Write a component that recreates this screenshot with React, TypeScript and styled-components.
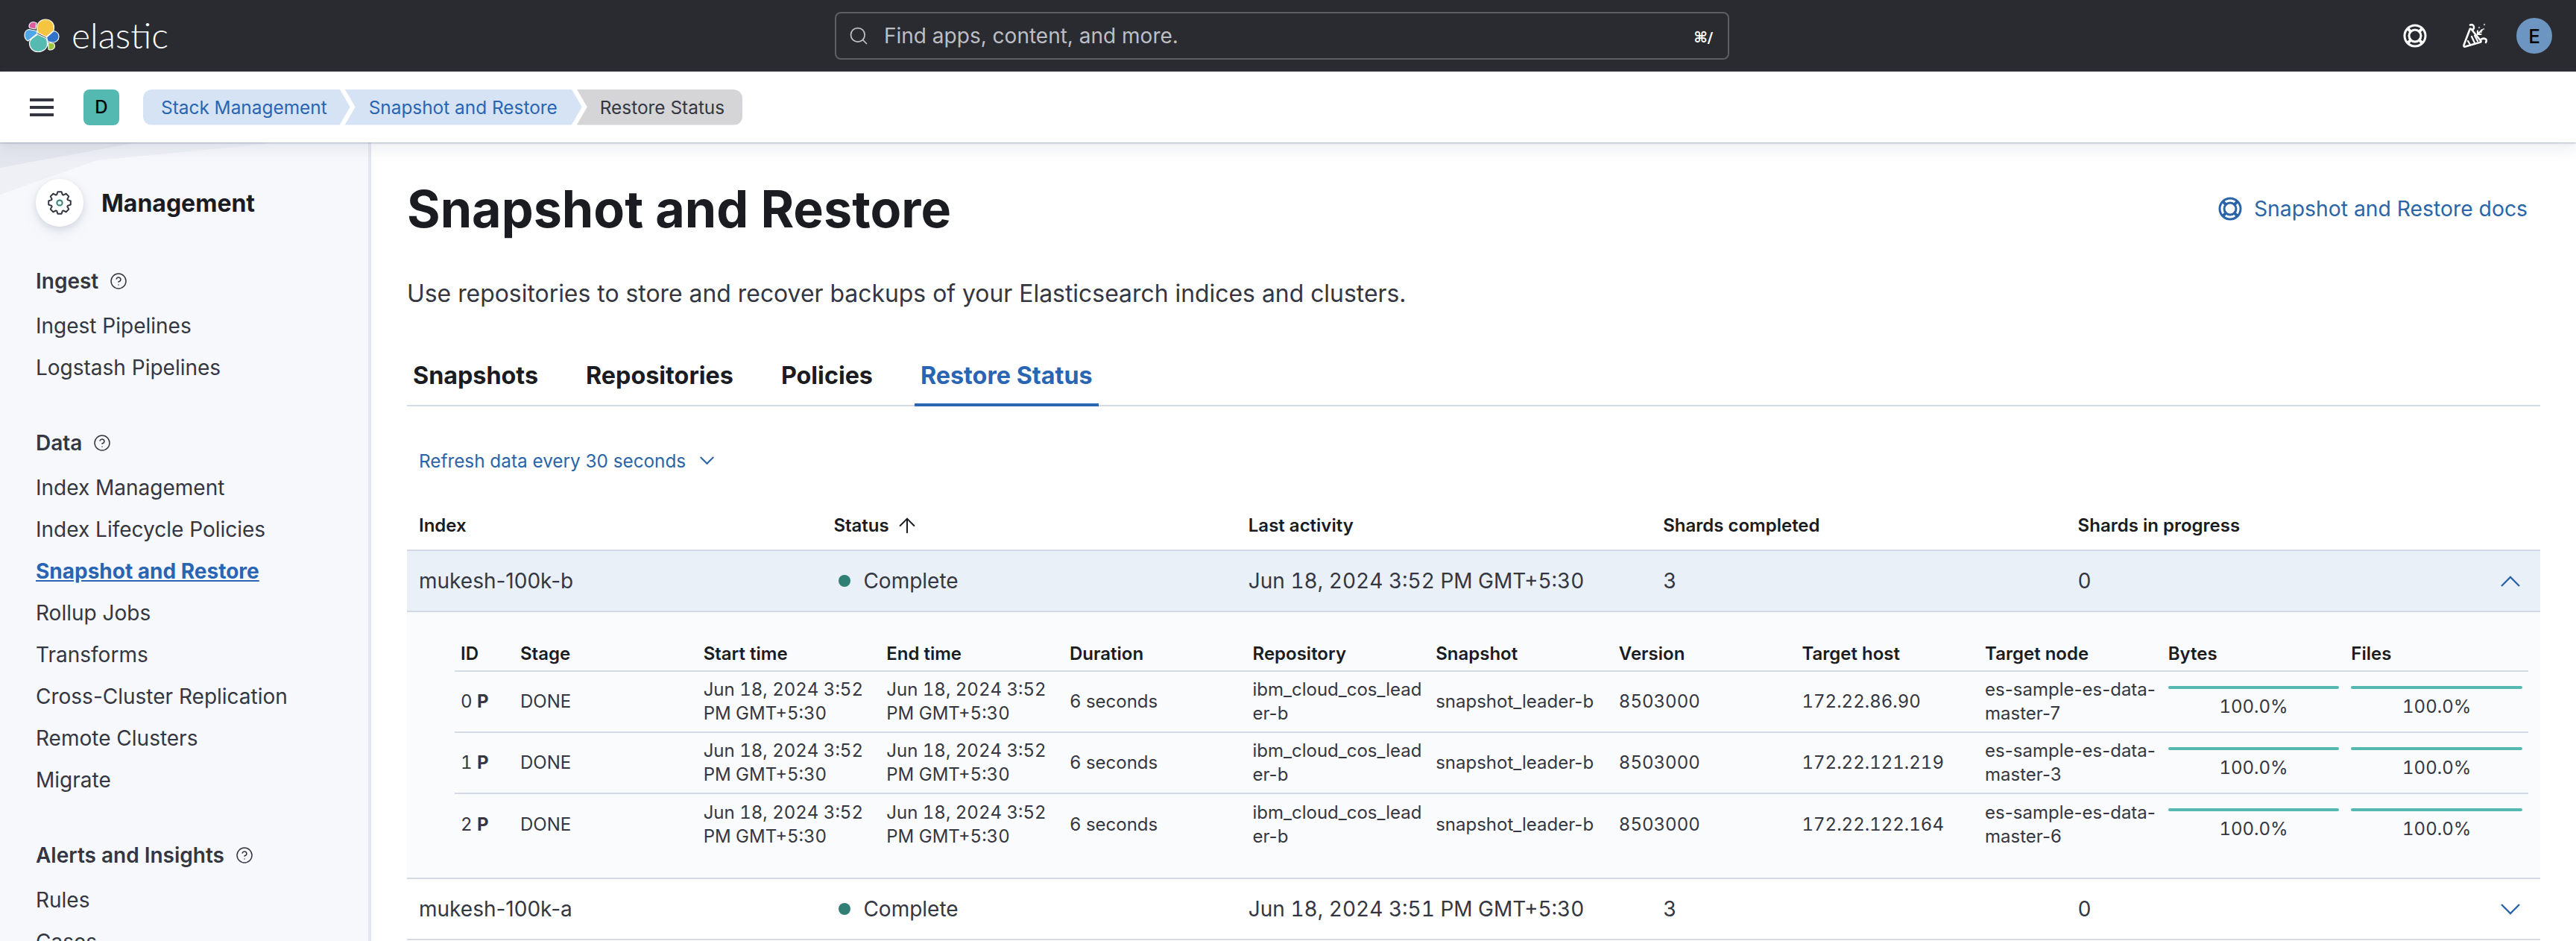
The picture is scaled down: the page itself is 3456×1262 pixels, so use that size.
import * as React from 'react';
import styled, { createGlobalStyle } from 'styled-components';
import { ArrowUp, CircleHelp, Search } from 'lucide-react';

const GlobalStyle = createGlobalStyle`
  html, body {
    margin: 0;
    padding: 0;
    height: 100%;
    overflow: hidden;
    background: #fff;
    font-family: Inter, "Liberation Sans", sans-serif;
    color: #343741;
  }
  * {
    box-sizing: border-box;
  }
`;

const Page = styled.div`
  display: flex;
  flex-direction: column;
  height: 1262px;
  overflow: hidden;
`;

const TopBar = styled.header`
  display: flex;
  align-items: center;
  flex: none;
  height: 96px;
  padding: 0 32px;
  background: #292b31;
`;

const LogoGroup = styled.div`
  display: flex;
  align-items: center;
  flex: 0 0 1088px;
  gap: 8px;
`;

const Wordmark = styled.span`
  font-family: Lato, Inter, sans-serif;
  font-weight: 300;
  font-size: 48px;
  line-height: 1;
  color: #fff;
  margin-top: -2px;
`;

const SearchBox = styled.div`
  display: flex;
  align-items: center;
  flex: none;
  width: 1200px;
  height: 64px;
  padding: 0 16px;
  border: 2px solid #5c5e63;
  border-radius: 8px;
`;

const SearchText = styled.span`
  flex: 1;
  margin-left: 20px;
  font-size: 28px;
  color: #bcbec4;
`;

const ShortcutKey = styled.span`
  font-family: 'DejaVu Sans', sans-serif;
  font-size: 20px;
  font-weight: 700;
  color: #fff;
  margin-top: 4px;
  margin-right: 4px;
`;

const TopActions = styled.div`
  display: flex;
  align-items: center;
  justify-content: flex-end;
  flex: 1;
  gap: 40px;
`;

const Avatar = styled.div`
  display: flex;
  align-items: center;
  justify-content: center;
  width: 48px;
  height: 48px;
  border-radius: 50%;
  background: #6d95c1;
  color: #000;
  font-size: 26px;
  font-weight: 500;
`;

const NavBar = styled.nav`
  position: relative;
  z-index: 2;
  display: flex;
  align-items: center;
  flex: none;
  height: 95px;
  padding: 0 40px;
  background: #fff;
  box-shadow: 0 1px 2px rgba(120, 132, 160, 0.55), 0 8px 20px rgba(152, 162, 179, 0.2);
`;

const MenuButton = styled.div`
  display: flex;
  flex-direction: column;
  gap: 6px;
  width: 32px;
  margin-right: 40px;
`;

const MenuBar = styled.span`
  display: block;
  height: 4px;
  background: #343741;
`;

const SpaceBadge = styled.div`
  display: flex;
  align-items: center;
  justify-content: center;
  width: 48px;
  height: 48px;
  margin-right: 32px;
  border-radius: 8px;
  background: #54b9b0;
  color: #000;
  font-size: 24px;
  font-weight: 500;
`;

const Crumbs = styled.div`
  display: flex;
  align-items: center;
`;

const Crumb = styled.span<{ $pos: 'first' | 'middle' | 'last' }>`
  display: flex;
  align-items: center;
  height: 48px;
  font-size: 24.4px;
  white-space: nowrap;
  color: ${p => (p.$pos === 'last' ? '#343741' : '#2a65b3')};
  background: ${p => (p.$pos === 'last' ? '#d5d5d8' : '#d6e3f4')};
  margin-left: ${p => (p.$pos === 'first' ? '0' : '-7px')};
  padding: ${p =>
    p.$pos === 'first' ? '0 31px 0 24px' : p.$pos === 'middle' ? '0 33px 0 32px' : '0 24px 0 31px'};
  border-radius: ${p =>
    p.$pos === 'first' ? '12px 0 0 12px' : p.$pos === 'last' ? '0 12px 12px 0' : '0'};
  clip-path: ${p =>
    p.$pos === 'first'
      ? 'polygon(0 0, calc(100% - 14px) 0, 100% 50%, calc(100% - 14px) 100%, 0 100%)'
      : p.$pos === 'middle'
        ? 'polygon(0 0, calc(100% - 14px) 0, 100% 50%, calc(100% - 14px) 100%, 0 100%, 14px 50%)'
        : 'polygon(0 0, 100% 0, 100% 100%, 0 100%, 14px 50%)'};
`;

const Body = styled.div`
  display: flex;
  flex: 1;
  min-height: 0;
`;

const Sidebar = styled.aside`
  position: relative;
  flex: none;
  width: 498px;
  padding: 49px 48px 0;
  overflow: hidden;
  background: #f6f8fc;
  border-right: 4px solid #e4e7f0;
`;

const SidebarDecor = styled.svg`
  position: absolute;
  top: 0;
  left: 0;
`;

const SidebarHead = styled.div`
  position: relative;
  display: flex;
  align-items: center;
  gap: 24px;
  margin-bottom: 45px;
`;

const GearCircle = styled.div`
  display: flex;
  align-items: center;
  justify-content: center;
  width: 64px;
  height: 64px;
  border-radius: 50%;
  background: #fff;
  box-shadow: 0 3px 8px rgba(152, 162, 179, 0.3), 0 8px 18px rgba(152, 162, 179, 0.14);
`;

const SidebarTitle = styled.h2`
  margin: 0;
  font-size: 32px;
  font-weight: 700;
  color: #1a1c21;
`;

const NavSection = styled.section`
  margin-bottom: 45px;
`;

const SectionHead = styled.div`
  display: flex;
  align-items: center;
  gap: 15px;
  height: 56px;
  margin-bottom: 4px;
  font-size: 28px;
  font-weight: 600;
  color: #343741;
`;

const NavItem = styled.a<{ $active?: boolean }>`
  display: flex;
  align-items: center;
  height: 56px;
  font-size: 28px;
  font-weight: ${p => (p.$active ? 700 : 400)};
  color: ${p => (p.$active ? '#2a65b3' : '#343741')};
  text-decoration: ${p => (p.$active ? 'underline' : 'none')};
`;

const Main = styled.main`
  flex: 1;
  min-width: 0;
  padding: 0 48px;
  background: #fff;
`;

const PageHead = styled.div`
  display: flex;
  align-items: center;
  justify-content: space-between;
  margin-top: 49px;
`;

const PageTitle = styled.h1`
  margin: 0;
  font-size: 68.2px;
  line-height: 80px;
  font-weight: 700;
  color: #1a1c21;
`;

const DocsLink = styled.a`
  display: flex;
  align-items: center;
  gap: 16px;
  margin-right: 17px;
  font-size: 28.3px;
  color: #2a65a8;
`;

const Description = styled.p`
  margin: 50px 0 0;
  font-size: 31.9px;
  line-height: 48px;
  color: #343741;
`;

const Tabs = styled.div`
  display: flex;
  gap: 48px;
  height: 85px;
  margin-top: 42px;
  border-bottom: 2px solid #d3dae6;
`;

const Tab = styled.div<{ $active?: boolean }>`
  display: flex;
  align-items: center;
  height: 85px;
  padding: 5px 8px 0;
  font-size: 32.3px;
  font-weight: 700;
  color: ${p => (p.$active ? '#2a65b3' : '#1a1c21')};
  border-bottom: 4px solid ${p => (p.$active ? '#2a65b3' : 'transparent')};
`;

const RefreshLink = styled.div`
  display: flex;
  align-items: center;
  gap: 19px;
  height: 32px;
  margin-top: 57px;
  padding-left: 16px;
  font-size: 24.3px;
  color: #2a65a8;
`;

const TableGrid = styled.div`
  display: grid;
  grid-template-columns: repeat(5, 1fr) 80px;
  align-items: center;
`;

const HeadRow = styled(TableGrid)`
  height: 71px;
  margin-top: 34px;
  padding-top: 4px;
  border-bottom: 2px solid #d3dae6;
`;

const HeadCell = styled.div`
  display: flex;
  align-items: center;
  gap: 8px;
  padding-left: 16px;
  font-size: 24px;
  font-weight: 600;
  color: #1a1c21;
`;

const DataRow = styled(TableGrid)<{ $open?: boolean }>`
  height: 82px;
  border-bottom: 2px solid #d3dae6;
  background: ${p => (p.$open ? '#e9f0f8' : '#fff')};
`;

const DataCell = styled.div<{ $num?: boolean }>`
  padding-left: 16px;
  font-size: 28px;
  color: #343741;
  font-variant-numeric: ${p => (p.$num ? 'tabular-nums' : 'normal')};
`;

const StatusCell = styled(DataCell)`
  display: flex;
  align-items: center;
  gap: 17px;
  padding-left: 23px;
`;

const StatusDot = styled.span`
  width: 16px;
  height: 16px;
  border-radius: 50%;
  background: #2f7f75;
`;

const Expander = styled.div`
  display: flex;
  justify-content: center;
`;

const Expanded = styled.div`
  padding: 32px 16px 30px 64px;
  background: #fafbfd;
  border-bottom: 2px solid #d3dae6;
`;

const ShardGrid = styled.div`
  display: grid;
  grid-template-columns: 80px repeat(11, minmax(0, 1fr));
`;

const ShardHead = styled(ShardGrid)`
  align-items: center;
  height: 48px;
  border-bottom: 2px solid #d3dae6;
`;

const ShardHeadCell = styled.div`
  padding: 0 8px;
  font-size: 24px;
  font-weight: 600;
  color: #1a1c21;
`;

const ShardRow = styled(ShardGrid)`
  align-items: center;
  height: 82px;
  &:not(:last-child) {
    border-bottom: 2px solid #d3dae6;
  }
`;

const ShardCell = styled.div<{ $num?: boolean }>`
  padding: 0 8px;
  font-size: 24px;
  line-height: 32px;
  color: #343741;
  overflow-wrap: anywhere;
  font-variant-numeric: ${p => (p.$num ? 'tabular-nums' : 'normal')};
`;

const ProgressCell = styled.div`
  align-self: start;
  padding: 19px 8px 0;
  font-size: 24px;
  line-height: 32px;
  text-align: center;
  color: #343741;
  font-variant-numeric: tabular-nums;
`;

const ProgressTrack = styled.div`
  height: 4px;
  margin-bottom: 8px;
  border-radius: 2px;
  background: #54b9b0;
`;

const Logo: React.FC = () => (
  <svg width="64" height="64" viewBox="0 0 64 64" style={{ marginLeft: -8, flex: 'none' }}>
    <g stroke="#fff" strokeWidth="1.2" strokeLinejoin="round">
      <path fill="#de5ba0" d="M15 19C15 16 17.5 13.5 20.5 13.5C22 13.5 23.5 14 25 15L23.5 23L16 21.5C15.3 21 15 20 15 19Z" />
      <path fill="#f5c542" d="M25.5 21C26 14 31 10 37 10C44 10 48.5 15 48.5 21C48.5 23 48 25 47 26L38 33.5L27 28C26 26 25.5 23.5 25.5 21Z" />
      <path fill="#4fa7e8" d="M15 23.5L25 25.5L26 29L13.5 39C10.5 37.5 9 34.5 9 31C9 27 11.5 24 15 23.5Z" />
      <path fill="#3173c8" d="M48 25.5C52 26 55 29 55 33C55 38 51 41 46.5 41L40 39.5L38.5 34Z" />
      <path fill="#55bab0" d="M15.5 42C15.5 39 16.5 37.5 19 35.5L26.5 30L38 35.5C39.5 38 39.5 40 39.5 43C39.5 49 34 53.5 27 53.5C20 53.5 15.5 48 15.5 42Z" />
      <path fill="#98c83c" d="M40.5 41L48.5 42.5C49 43.5 49.5 44.5 49.5 45.5C49.5 48.5 47 51 44 51C43 51 42 50.8 41 50.2Z" />
    </g>
  </svg>
);

const LifeBuoy: React.FC<{ color: string }> = ({ color }) => (
  <svg width="32" height="32" viewBox="0 0 32 32" fill="none" stroke={color} strokeWidth="3">
    <circle cx="16" cy="16" r="14" />
    <circle cx="16" cy="16" r="8" />
    <path d="M6 6L10.3 10.3M26 6L21.7 10.3M6 26L10.3 21.7M26 26L21.7 21.7" strokeWidth="4" />
  </svg>
);

const Cheer: React.FC = () => (
  <svg width="48" height="48" viewBox="0 0 48 48" fill="none" stroke="#fff" strokeWidth="2.6" strokeLinecap="round" strokeLinejoin="round" style={{ margin: '0 -8px 0 0' }}>
    <path d="M17.5 15.5L9.5 36.5Q9 39 11.5 38.5L32 32.5Q33 31.5 32 30.5L19.5 15Q18 14 17.5 15.5Z" />
    <path d="M15 31L17.5 35M20 25L24 33.5M24 23.5L28 31" strokeWidth="2.2" />
    <path d="M18 9.5Q22 8 23 12Q23.5 14 22 15.5" />
    <path d="M28 17.5L28 22L32.5 22M28 22L34 16" strokeWidth="2.2" />
    <path d="M33 28.5Q37 26.5 39.5 29Q40.5 31 39 33" />
    <path d="M30 13h.1M37 9h.1M36 15h.1M33 19h.1" strokeWidth="2.4" opacity="0.6" />
  </svg>
);

const GearIcon: React.FC = () => {
  // eight toothed cog, points worked out once per render
  const points: string[] = [];
  for (let i = 0; i < 8; i++) {
    const a = (i * Math.PI) / 4 - Math.PI / 2;
    const spread = 0.2;
    [
      [11.5, a - spread - 0.14],
      [15, a - spread + 0.03],
      [15, a + spread - 0.03],
      [11.5, a + spread + 0.14],
    ].forEach(([r, t]) => {
      points.push(`${(16 + r * Math.cos(t)).toFixed(2)},${(16 + r * Math.sin(t)).toFixed(2)}`);
    });
  }
  return (
    <svg width="32" height="32" viewBox="0 0 32 32" fill="none">
      <polygon points={points.join(' ')} stroke="#343741" strokeWidth="2" strokeLinejoin="round" />
      <circle cx="16" cy="16" r="3.6" stroke="#2f7f75" strokeWidth="2" />
    </svg>
  );
};

const Chevron: React.FC<{ up?: boolean; width: number; stroke: number }> = ({ up, width, stroke }) => (
  <svg width={width} height={width / 2 + 2} viewBox="0 0 26 15" fill="none" stroke="#2a65a8" strokeWidth={(stroke * 26) / width}>
    <path d={up ? 'M1 14L13 2L25 14' : 'M1 1L13 13L25 1'} />
  </svg>
);

const HelpIcon = () => <CircleHelp size={24} strokeWidth={1.5} color="#343741" />;

const shards = [
  { id: 0, host: '172.22.86.90', node: 'es-sample-es-data-master-7' },
  { id: 1, host: '172.22.121.219', node: 'es-sample-es-data-master-3' },
  { id: 2, host: '172.22.122.164', node: 'es-sample-es-data-master-6' },
];

const shardColumns = [
  'ID',
  'Stage',
  'Start time',
  'End time',
  'Duration',
  'Repository',
  'Snapshot',
  'Version',
  'Target host',
  'Target node',
  'Bytes',
  'Files',
];

const navGroups = [
  { title: 'Ingest', items: ['Ingest Pipelines', 'Logstash Pipelines'] },
  {
    title: 'Data',
    items: [
      'Index Management',
      'Index Lifecycle Policies',
      'Snapshot and Restore',
      'Rollup Jobs',
      'Transforms',
      'Cross-Cluster Replication',
      'Remote Clusters',
      'Migrate',
    ],
  },
  { title: 'Alerts and Insights', items: ['Rules', 'Cases'] },
];

const tabs = ['Snapshots', 'Repositories', 'Policies', 'Restore Status'];

const stamp = 'Jun 18, 2024 3:52 PM GMT+5:30';

const App: React.FC = () => (
  <Page>
    <GlobalStyle />
    <TopBar>
      <LogoGroup>
        <Logo />
        <Wordmark>elastic</Wordmark>
      </LogoGroup>
      <SearchBox>
        <Search size={28} strokeWidth={1.5} color="#bcbec4" />
        <SearchText>Find apps, content, and more.</SearchText>
        <ShortcutKey>⌘/</ShortcutKey>
      </SearchBox>
      <TopActions>
        <LifeBuoy color="#fff" />
        <Cheer />
        <Avatar>E</Avatar>
      </TopActions>
    </TopBar>
    <NavBar>
      <MenuButton>
        <MenuBar />
        <MenuBar />
        <MenuBar />
      </MenuButton>
      <SpaceBadge>D</SpaceBadge>
      <Crumbs>
        <Crumb $pos="first">Stack Management</Crumb>
        <Crumb $pos="middle">Snapshot and Restore</Crumb>
        <Crumb $pos="last">Restore Status</Crumb>
      </Crumbs>
    </NavBar>
    <Body>
      <Sidebar>
        <SidebarDecor width="498" height="90" viewBox="0 0 498 90">
          <polygon points="0,70 130,24 358,2 358,0 0,0" fill="#eef0f6" />
          <polygon points="0,34 185,0 0,0" fill="#e4e6ee" />
        </SidebarDecor>
        <SidebarHead>
          <GearCircle>
            <GearIcon />
          </GearCircle>
          <SidebarTitle>Management</SidebarTitle>
        </SidebarHead>
        {navGroups.map(group => (
          <NavSection key={group.title}>
            <SectionHead>
              {group.title}
              <HelpIcon />
            </SectionHead>
            {group.items.map(item => (
              <NavItem key={item} $active={item === 'Snapshot and Restore'}>
                {item}
              </NavItem>
            ))}
          </NavSection>
        ))}
      </Sidebar>
      <Main>
        <PageHead>
          <PageTitle>Snapshot and Restore</PageTitle>
          <DocsLink>
            <LifeBuoy color="#2a65a8" />
            Snapshot and Restore docs
          </DocsLink>
        </PageHead>
        <Description>
          Use repositories to store and recover backups of your Elasticsearch indices and clusters.
        </Description>
        <Tabs>
          {tabs.map(tab => (
            <Tab key={tab} $active={tab === 'Restore Status'}>
              {tab}
            </Tab>
          ))}
        </Tabs>
        <RefreshLink>
          Refresh data every 30 seconds
          <Chevron width={19} stroke={2} />
        </RefreshLink>
        <HeadRow>
          <HeadCell>Index</HeadCell>
          <HeadCell>
            Status <ArrowUp size={32} strokeWidth={1.5} color="#1a1c21" />
          </HeadCell>
          <HeadCell>Last activity</HeadCell>
          <HeadCell>Shards completed</HeadCell>
          <HeadCell>Shards in progress</HeadCell>
          <div />
        </HeadRow>
        <DataRow $open>
          <DataCell>mukesh-100k-b</DataCell>
          <StatusCell>
            <StatusDot />
            Complete
          </StatusCell>
          <DataCell $num>Jun 18, 2024 3:52 PM GMT+5:30</DataCell>
          <DataCell $num>3</DataCell>
          <DataCell $num>0</DataCell>
          <Expander>
            <Chevron up width={26} stroke={2.4} />
          </Expander>
        </DataRow>
        <Expanded>
          <ShardHead>
            {shardColumns.map(col => (
              <ShardHeadCell key={col}>{col}</ShardHeadCell>
            ))}
          </ShardHead>
          {shards.map(s => (
            <ShardRow key={s.id}>
              <ShardCell $num>
                {s.id} <b>P</b>
              </ShardCell>
              <ShardCell>DONE</ShardCell>
              <ShardCell $num>{stamp}</ShardCell>
              <ShardCell $num>{stamp}</ShardCell>
              <ShardCell $num>6 seconds</ShardCell>
              <ShardCell>ibm_cloud_cos_leader-b</ShardCell>
              <ShardCell>snapshot_leader-b</ShardCell>
              <ShardCell $num>8503000</ShardCell>
              <ShardCell $num>{s.host}</ShardCell>
              <ShardCell>{s.node}</ShardCell>
              <ProgressCell>
                <ProgressTrack />
                100.0%
              </ProgressCell>
              <ProgressCell>
                <ProgressTrack />
                100.0%
              </ProgressCell>
            </ShardRow>
          ))}
        </Expanded>
        <DataRow>
          <DataCell>mukesh-100k-a</DataCell>
          <StatusCell>
            <StatusDot />
            Complete
          </StatusCell>
          <DataCell $num>Jun 18, 2024 3:51 PM GMT+5:30</DataCell>
          <DataCell $num>3</DataCell>
          <DataCell $num>0</DataCell>
          <Expander>
            <Chevron width={26} stroke={2.4} />
          </Expander>
        </DataRow>
      </Main>
    </Body>
  </Page>
);

export default App;
